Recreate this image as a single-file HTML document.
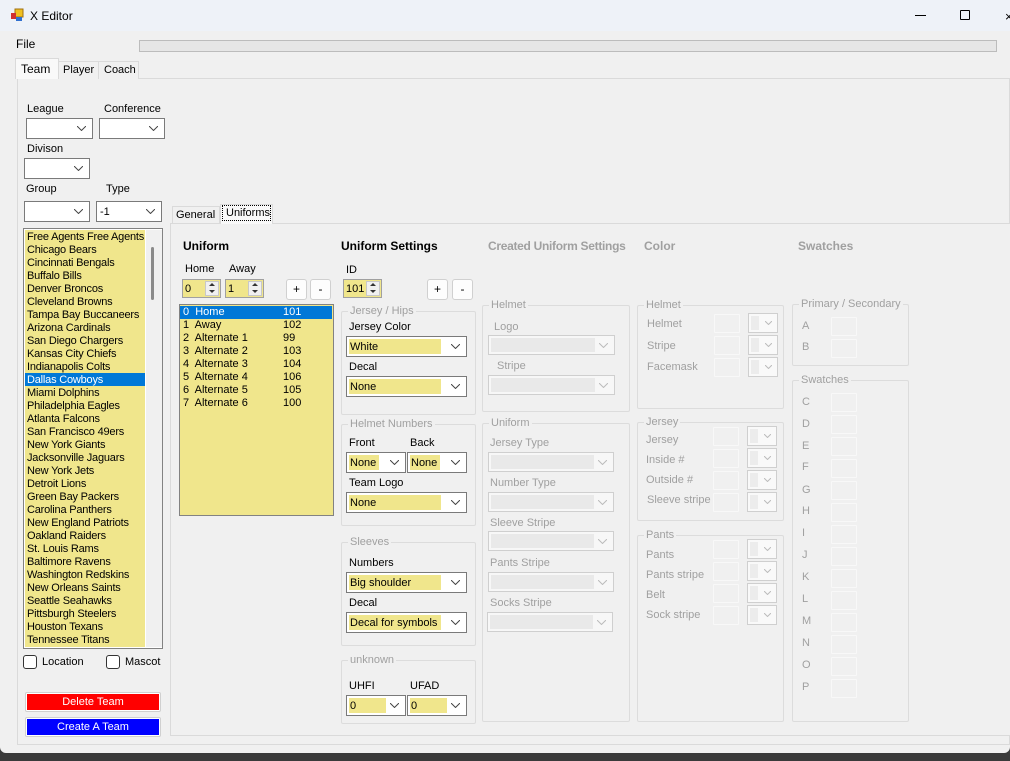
<!DOCTYPE html>
<html><head><meta charset="utf-8"><style>
*{box-sizing:border-box;margin:0;padding:0}
body{width:1010px;height:761px;overflow:hidden;background:#3a3a3a;font-family:"Liberation Sans",sans-serif;font-size:11px;color:#000;position:relative}
.a{position:absolute;white-space:nowrap}
.t{padding-top:1px}
.win{position:absolute;left:0;top:0;width:1010px;height:753px;background:#f0f0f0;border-radius:0 0 6px 6px}
.tb{position:absolute;left:0;top:0;width:1010px;height:31px;background:#eef2f8}
.cb{position:absolute;border:1px solid #7a7a7a;background:#fff;height:21px}
.cb i{position:absolute;left:2px;top:2px;bottom:2px;background:#f0e68c}
.cb span{position:absolute;left:3px;top:4px;line-height:13px}
.cb svg{position:absolute;right:6px;top:7px}
.cb.d{border-color:#cfcfcf;background:#f7f7f7}
.cb.d i{background:#e9e9e9}
.g{position:absolute;border:1px solid #dcdcdc;border-radius:2px}
.g b{position:absolute;left:6px;top:-8px;background:#f0f0f0;padding:0 2px;font-weight:normal;color:#a0a0a0;line-height:14px}
.gr{color:#a0a0a0}
.h{font-weight:bold;font-size:12px}
.btn{position:absolute;width:21px;height:21px;border:1px solid #d0d0d0;border-radius:3px;background:#fdfdfd;text-align:center;line-height:18px;font-size:12px}
.nud{position:absolute;height:19px;border:1px solid #a0a0a0;background:#f0e68c}
.nud span{position:absolute;left:2px;top:3px;line-height:13px}
.nud .sp{position:absolute;right:1px;top:1px;width:14px;height:15px;background:#f0f0f0;border:1px solid #c8c8c8}
.sp:before{content:"";position:absolute;left:3px;top:1px;border:3px solid transparent;border-bottom:3px solid #333;border-top:0}
.sp:after{content:"";position:absolute;left:3px;top:8px;border:3px solid transparent;border-top:3px solid #333;border-bottom:0}
.sw{position:absolute;width:26px;height:19px;border:1px solid #f8f8f8;border-radius:1px}
.mc{position:absolute;width:30px;height:20px;border:1px solid #cfcfcf;background:#f9f9f9}
.mc i{position:absolute;left:2px;top:2px;width:8px;bottom:2px;background:#ececec}
.mc svg{position:absolute;right:5px;top:7px}
.li{line-height:13px}
</style></head><body>
<div class="win">
<div class="tb"></div>
<svg class="a" style="left:10px;top:8px" width="14" height="14"><rect x="5" y="1" width="8" height="8" fill="#f0c020" stroke="#a07010"/><rect x="1" y="5" width="5" height="6" fill="#d03030"/><rect x="6" y="9" width="6" height="4" fill="#3070d0"/></svg>
<div class="a" style="left:30px;top:9px;font-size:12px">X Editor</div>
<div class="a" style="left:915px;top:15px;width:11px;height:1px;background:#000"></div>
<div class="a" style="left:960px;top:10px;width:10px;height:10px;border:1px solid #000;border-radius:1px"></div>
<div class="a" style="left:1005px;top:9px;font-size:13px">×</div>

<div class="a" style="left:16px;top:37px;font-size:12px">File</div>
<div class="a" style="left:139px;top:40px;width:858px;height:12px;background:#e6e6e6;border:1px solid #bcbcbc"></div>

<div class="a" style="left:17px;top:78px;width:993px;height:667px;border:1px solid #dadada;background:#f0f0f0"></div>
<div class="a" style="left:15px;top:58px;width:44px;height:21px;background:#f9f9f9;border:1px solid #dadada;border-bottom:none"></div>
<div class="a" style="left:21px;top:62px;font-size:12px">Team</div>
<div class="a" style="left:58px;top:61px;width:41px;height:18px;border:1px solid #dadada;border-bottom:none;background:#f0f0f0"></div>
<div class="a" style="left:63px;top:64px">Player</div>
<div class="a" style="left:98px;top:61px;width:41px;height:18px;border:1px solid #dadada;border-bottom:none;background:#f0f0f0"></div>
<div class="a" style="left:104px;top:64px">Coach</div>

<div class="a" style="left:27px;top:103px">League</div>
<div class="a" style="left:104px;top:103px">Conference</div>
<div class="cb" style="left:26px;top:118px;width:67px"><svg width="9" height="5"><polyline points="0,0 4.5,4.5 9,0" fill="none" stroke="#444"/></svg></div>
<div class="cb" style="left:99px;top:118px;width:66px"><svg width="9" height="5"><polyline points="0,0 4.5,4.5 9,0" fill="none" stroke="#444"/></svg></div>
<div class="a" style="left:27px;top:143px">Divison</div>
<div class="cb" style="left:24px;top:158px;width:66px"><svg width="9" height="5"><polyline points="0,0 4.5,4.5 9,0" fill="none" stroke="#444"/></svg></div>
<div class="a" style="left:26px;top:183px">Group</div>
<div class="a" style="left:106px;top:183px">Type</div>
<div class="cb" style="left:24px;top:201px;width:66px"><svg width="9" height="5"><polyline points="0,0 4.5,4.5 9,0" fill="none" stroke="#444"/></svg></div>
<div class="cb" style="left:96px;top:201px;width:66px"><span>-1</span><svg width="9" height="5"><polyline points="0,0 4.5,4.5 9,0" fill="none" stroke="#444"/></svg></div>

<div class="a" style="left:23px;top:228px;width:140px;height:421px;border:1px solid #828282;background:#fff"></div>
<div class="a" style="left:25px;top:230px;width:120px;height:417px;background:#f0e68c"></div>
<div class="a" style="left:146px;top:230px;width:16px;height:417px;background:#f0f0f0"></div>
<div class="a" style="left:151px;top:247px;width:3px;height:53px;background:#8a8a8a;border-radius:2px"></div>
<div class="a" style="left:25px;top:373px;width:120px;height:13px;background:#0078d7"></div>
<div class="a li" style="left:27px;top:231px;letter-spacing:-0.2px">Free Agents Free Agents<br>Chicago Bears<br>Cincinnati Bengals<br>Buffalo Bills<br>Denver Broncos<br>Cleveland Browns<br>Tampa Bay Buccaneers<br>Arizona Cardinals<br>San Diego Chargers<br>Kansas City Chiefs<br>Indianapolis Colts<br><span style="color:#fff">Dallas Cowboys</span><br>Miami Dolphins<br>Philadelphia Eagles<br>Atlanta Falcons<br>San Francisco 49ers<br>New York Giants<br>Jacksonville Jaguars<br>New York Jets<br>Detroit Lions<br>Green Bay Packers<br>Carolina Panthers<br>New England Patriots<br>Oakland Raiders<br>St. Louis Rams<br>Baltimore Ravens<br>Washington Redskins<br>New Orleans Saints<br>Seattle Seahawks<br>Pittsburgh Steelers<br>Houston Texans<br>Tennessee Titans</div>

<div class="a" style="left:23px;top:655px;width:14px;height:14px;border:1px solid #333;border-radius:3px;background:#fff"></div>
<div class="a" style="left:42px;top:656px">Location</div>
<div class="a" style="left:106px;top:655px;width:14px;height:14px;border:1px solid #333;border-radius:3px;background:#fff"></div>
<div class="a" style="left:125px;top:656px">Mascot</div>
<div class="a" style="left:25px;top:692px;width:136px;height:20px;border:1px solid #d0d0d0;border-radius:2px;background:#fff"></div>
<div class="a" style="left:27px;top:694px;width:132px;height:16px;background:#f00;color:#fff;text-align:center;line-height:16px">Delete Team</div>
<div class="a" style="left:25px;top:717px;width:136px;height:20px;border:1px solid #d0d0d0;border-radius:2px;background:#fff"></div>
<div class="a" style="left:27px;top:719px;width:132px;height:16px;background:#00f;color:#fff;text-align:center;line-height:16px">Create A Team</div>

<div class="a" style="left:170px;top:223px;width:840px;height:513px;border:1px solid #dadada;border-right:none;background:#f0f0f0"></div>
<div class="a" style="left:172px;top:206px;width:48px;height:18px;border:1px solid #dadada;border-bottom:none"></div>
<div class="a" style="left:176px;top:209px">General</div>
<div class="a" style="left:220px;top:204px;width:53px;height:20px;border:1px solid #dadada;border-bottom:none;background:#f9f9f9"></div>
<div class="a" style="left:222px;top:205px;width:49px;height:16px;border:1px dotted #000"></div>
<div class="a" style="left:226px;top:207px">Uniforms</div>

<div class="a h" style="left:183px;top:239px">Uniform</div>
<div class="a h" style="left:341px;top:239px">Uniform Settings</div>
<div class="a h gr" style="left:488px;top:239px;letter-spacing:-0.3px">Created Uniform Settings</div>
<div class="a h gr" style="left:644px;top:239px">Color</div>
<div class="a h gr" style="left:798px;top:239px">Swatches</div>

<div class="a" style="left:185px;top:263px">Home</div>
<div class="a" style="left:229px;top:263px">Away</div>
<div class="nud" style="left:182px;top:279px;width:39px"><span>0</span><div class="sp"></div></div>
<div class="nud" style="left:225px;top:279px;width:39px"><span>1</span><div class="sp"></div></div>
<div class="btn" style="left:286px;top:279px">+</div>
<div class="btn" style="left:310px;top:279px">-</div>
<div class="a" style="left:346px;top:264px">ID</div>
<div class="nud" style="left:343px;top:279px;width:39px"><span>101</span><div class="sp"></div></div>
<div class="btn" style="left:427px;top:279px">+</div>
<div class="btn" style="left:452px;top:279px">-</div>

<div class="a" style="left:179px;top:304px;width:155px;height:212px;border:1px solid #828282;background:#f0e68c"></div>
<div class="a" style="left:180px;top:306px;width:152px;height:13px;background:#0078d7"></div>
<div class="a li" style="left:183px;top:306px"><span style="color:#fff">0&nbsp; Home</span><br>1&nbsp; Away<br>2&nbsp; Alternate 1<br>3&nbsp; Alternate 2<br>4&nbsp; Alternate 3<br>5&nbsp; Alternate 4<br>6&nbsp; Alternate 5<br>7&nbsp; Alternate 6</div>
<div class="a li" style="left:283px;top:306px"><span style="color:#fff">101</span><br>102<br>99<br>103<br>104<br>106<br>105<br>100</div>

<div class="g" style="left:341px;top:311px;width:135px;height:104px"><b>Jersey / Hips</b></div>
<div class="a" style="left:349px;top:321px">Jersey Color</div>
<div class="cb" style="left:346px;top:336px;width:121px"><i style="width:92px"></i><span>White</span><svg width="9" height="5"><polyline points="0,0 4.5,4.5 9,0" fill="none" stroke="#444"/></svg></div>
<div class="a" style="left:349px;top:361px">Decal</div>
<div class="cb" style="left:346px;top:376px;width:121px"><i style="width:92px"></i><span>None</span><svg width="9" height="5"><polyline points="0,0 4.5,4.5 9,0" fill="none" stroke="#444"/></svg></div>

<div class="g" style="left:341px;top:424px;width:135px;height:102px"><b>Helmet Numbers</b></div>
<div class="a" style="left:349px;top:437px">Front</div>
<div class="a" style="left:410px;top:437px">Back</div>
<div class="cb" style="left:346px;top:452px;width:60px"><i style="width:30px"></i><span>None</span><svg width="9" height="5"><polyline points="0,0 4.5,4.5 9,0" fill="none" stroke="#444"/></svg></div>
<div class="cb" style="left:407px;top:452px;width:60px"><i style="width:30px"></i><span>None</span><svg width="9" height="5"><polyline points="0,0 4.5,4.5 9,0" fill="none" stroke="#444"/></svg></div>
<div class="a" style="left:349px;top:477px">Team Logo</div>
<div class="cb" style="left:346px;top:492px;width:121px"><i style="width:92px"></i><span>None</span><svg width="9" height="5"><polyline points="0,0 4.5,4.5 9,0" fill="none" stroke="#444"/></svg></div>

<div class="g" style="left:341px;top:542px;width:135px;height:104px"><b>Sleeves</b></div>
<div class="a" style="left:349px;top:557px">Numbers</div>
<div class="cb" style="left:346px;top:572px;width:121px"><i style="width:92px"></i><span>Big shoulder</span><svg width="9" height="5"><polyline points="0,0 4.5,4.5 9,0" fill="none" stroke="#444"/></svg></div>
<div class="a" style="left:349px;top:597px">Decal</div>
<div class="cb" style="left:346px;top:612px;width:121px"><i style="width:92px"></i><span>Decal for symbols</span><svg width="9" height="5"><polyline points="0,0 4.5,4.5 9,0" fill="none" stroke="#444"/></svg></div>

<div class="g" style="left:341px;top:660px;width:135px;height:64px"><b>unknown</b></div>
<div class="a" style="left:349px;top:680px">UHFI</div>
<div class="a" style="left:410px;top:680px">UFAD</div>
<div class="cb" style="left:346px;top:695px;width:60px"><i style="width:37px"></i><span>0</span><svg width="9" height="5"><polyline points="0,0 4.5,4.5 9,0" fill="none" stroke="#444"/></svg></div>
<div class="cb" style="left:407px;top:695px;width:60px"><i style="width:37px"></i><span>0</span><svg width="9" height="5"><polyline points="0,0 4.5,4.5 9,0" fill="none" stroke="#444"/></svg></div>

<div class="g" style="left:482px;top:305px;width:148px;height:107px"><b>Helmet</b></div>
<div class="a gr" style="left:494px;top:321px">Logo</div>
<div class="cb d" style="left:488px;top:335px;width:127px;height:20px"><i style="width:104px"></i><svg width="9" height="5"><polyline points="0,0 4.5,4.5 9,0" fill="none" stroke="#bbb"/></svg></div>
<div class="a gr" style="left:497px;top:360px">Stripe</div>
<div class="cb d" style="left:488px;top:375px;width:127px;height:20px"><i style="width:104px"></i><svg width="9" height="5"><polyline points="0,0 4.5,4.5 9,0" fill="none" stroke="#bbb"/></svg></div>

<div class="g" style="left:482px;top:423px;width:148px;height:299px"><b>Uniform</b></div>
<div class="a gr" style="left:490px;top:437px">Jersey Type</div>
<div class="cb d" style="left:488px;top:452px;width:126px;height:20px"><i style="width:103px"></i><svg width="9" height="5"><polyline points="0,0 4.5,4.5 9,0" fill="none" stroke="#bbb"/></svg></div>
<div class="a gr" style="left:490px;top:477px">Number Type</div>
<div class="cb d" style="left:488px;top:492px;width:126px;height:20px"><i style="width:103px"></i><svg width="9" height="5"><polyline points="0,0 4.5,4.5 9,0" fill="none" stroke="#bbb"/></svg></div>
<div class="a gr" style="left:490px;top:517px">Sleeve Stripe</div>
<div class="cb d" style="left:488px;top:531px;width:126px;height:20px"><i style="width:103px"></i><svg width="9" height="5"><polyline points="0,0 4.5,4.5 9,0" fill="none" stroke="#bbb"/></svg></div>
<div class="a gr" style="left:490px;top:557px">Pants Stripe</div>
<div class="cb d" style="left:488px;top:572px;width:126px;height:20px"><i style="width:103px"></i><svg width="9" height="5"><polyline points="0,0 4.5,4.5 9,0" fill="none" stroke="#bbb"/></svg></div>
<div class="a gr" style="left:490px;top:597px">Socks Stripe</div>
<div class="cb d" style="left:487px;top:612px;width:126px;height:20px"><i style="width:103px"></i><svg width="9" height="5"><polyline points="0,0 4.5,4.5 9,0" fill="none" stroke="#bbb"/></svg></div>

<div class="g" style="left:637px;top:305px;width:147px;height:104px"><b>Helmet</b></div>
<div class="g" style="left:637px;top:422px;width:147px;height:99px"><b>Jersey</b></div>
<div class="g" style="left:637px;top:535px;width:147px;height:187px"><b>Pants</b></div>
<div class="a gr" style="left:647px;top:318px">Helmet</div>
<div class="a gr" style="left:647px;top:340px">Stripe</div>
<div class="a gr" style="left:647px;top:361px">Facemask</div>
<div class="a gr" style="left:646px;top:434px">Jersey</div>
<div class="a gr" style="left:646px;top:454px">Inside #</div>
<div class="a gr" style="left:646px;top:474px">Outside #</div>
<div class="a gr" style="left:647px;top:494px">Sleeve stripe</div>
<div class="a gr" style="left:646px;top:549px">Pants</div>
<div class="a gr" style="left:646px;top:569px">Pants stripe</div>
<div class="a gr" style="left:646px;top:589px">Belt</div>
<div class="a gr" style="left:646px;top:609px">Sock stripe</div>

<div class="sw" style="left:714px;top:314px"></div><div class="mc" style="left:748px;top:313px"><i></i><svg width="7" height="4"><polyline points="0,0 3.5,3.5 7,0" fill="none" stroke="#bbb"/></svg></div>
<div class="sw" style="left:714px;top:336px"></div><div class="mc" style="left:748px;top:335px"><i></i><svg width="7" height="4"><polyline points="0,0 3.5,3.5 7,0" fill="none" stroke="#bbb"/></svg></div>
<div class="sw" style="left:714px;top:358px"></div><div class="mc" style="left:748px;top:357px"><i></i><svg width="7" height="4"><polyline points="0,0 3.5,3.5 7,0" fill="none" stroke="#bbb"/></svg></div>

<div class="sw" style="left:713px;top:427px"></div><div class="mc" style="left:747px;top:426px"><i></i><svg width="7" height="4"><polyline points="0,0 3.5,3.5 7,0" fill="none" stroke="#bbb"/></svg></div>
<div class="sw" style="left:713px;top:449px"></div><div class="mc" style="left:747px;top:448px"><i></i><svg width="7" height="4"><polyline points="0,0 3.5,3.5 7,0" fill="none" stroke="#bbb"/></svg></div>
<div class="sw" style="left:713px;top:471px"></div><div class="mc" style="left:747px;top:470px"><i></i><svg width="7" height="4"><polyline points="0,0 3.5,3.5 7,0" fill="none" stroke="#bbb"/></svg></div>
<div class="sw" style="left:713px;top:493px"></div><div class="mc" style="left:747px;top:492px"><i></i><svg width="7" height="4"><polyline points="0,0 3.5,3.5 7,0" fill="none" stroke="#bbb"/></svg></div>

<div class="sw" style="left:713px;top:540px"></div><div class="mc" style="left:747px;top:539px"><i></i><svg width="7" height="4"><polyline points="0,0 3.5,3.5 7,0" fill="none" stroke="#bbb"/></svg></div>
<div class="sw" style="left:713px;top:562px"></div><div class="mc" style="left:747px;top:561px"><i></i><svg width="7" height="4"><polyline points="0,0 3.5,3.5 7,0" fill="none" stroke="#bbb"/></svg></div>
<div class="sw" style="left:713px;top:584px"></div><div class="mc" style="left:747px;top:583px"><i></i><svg width="7" height="4"><polyline points="0,0 3.5,3.5 7,0" fill="none" stroke="#bbb"/></svg></div>
<div class="sw" style="left:713px;top:606px"></div><div class="mc" style="left:747px;top:605px"><i></i><svg width="7" height="4"><polyline points="0,0 3.5,3.5 7,0" fill="none" stroke="#bbb"/></svg></div>

<div class="g" style="left:792px;top:304px;width:117px;height:62px"><b>Primary / Secondary</b></div>
<div class="a gr" style="left:802px;top:320px">A</div><div class="sw" style="left:831px;top:317px"></div>
<div class="a gr" style="left:802px;top:341px">B</div><div class="sw" style="left:831px;top:339px"></div>
<div class="g" style="left:792px;top:380px;width:117px;height:342px"><b>Swatches</b></div>
<div class="a gr" style="left:802px;top:396px">C</div><div class="sw" style="left:831px;top:393px"></div>
<div class="a gr" style="left:802px;top:418px">D</div><div class="sw" style="left:831px;top:415px"></div>
<div class="a gr" style="left:802px;top:440px">E</div><div class="sw" style="left:831px;top:437px"></div>
<div class="a gr" style="left:802px;top:461px">F</div><div class="sw" style="left:831px;top:459px"></div>
<div class="a gr" style="left:802px;top:484px">G</div><div class="sw" style="left:831px;top:481px"></div>
<div class="a gr" style="left:802px;top:505px">H</div><div class="sw" style="left:831px;top:503px"></div>
<div class="a gr" style="left:802px;top:527px">I</div><div class="sw" style="left:831px;top:525px"></div>
<div class="a gr" style="left:802px;top:549px">J</div><div class="sw" style="left:831px;top:547px"></div>
<div class="a gr" style="left:802px;top:571px">K</div><div class="sw" style="left:831px;top:569px"></div>
<div class="a gr" style="left:802px;top:593px">L</div><div class="sw" style="left:831px;top:591px"></div>
<div class="a gr" style="left:802px;top:615px">M</div><div class="sw" style="left:831px;top:613px"></div>
<div class="a gr" style="left:802px;top:637px">N</div><div class="sw" style="left:831px;top:635px"></div>
<div class="a gr" style="left:802px;top:659px">O</div><div class="sw" style="left:831px;top:657px"></div>
<div class="a gr" style="left:802px;top:681px">P</div><div class="sw" style="left:831px;top:679px"></div>
</div>
</body></html>
